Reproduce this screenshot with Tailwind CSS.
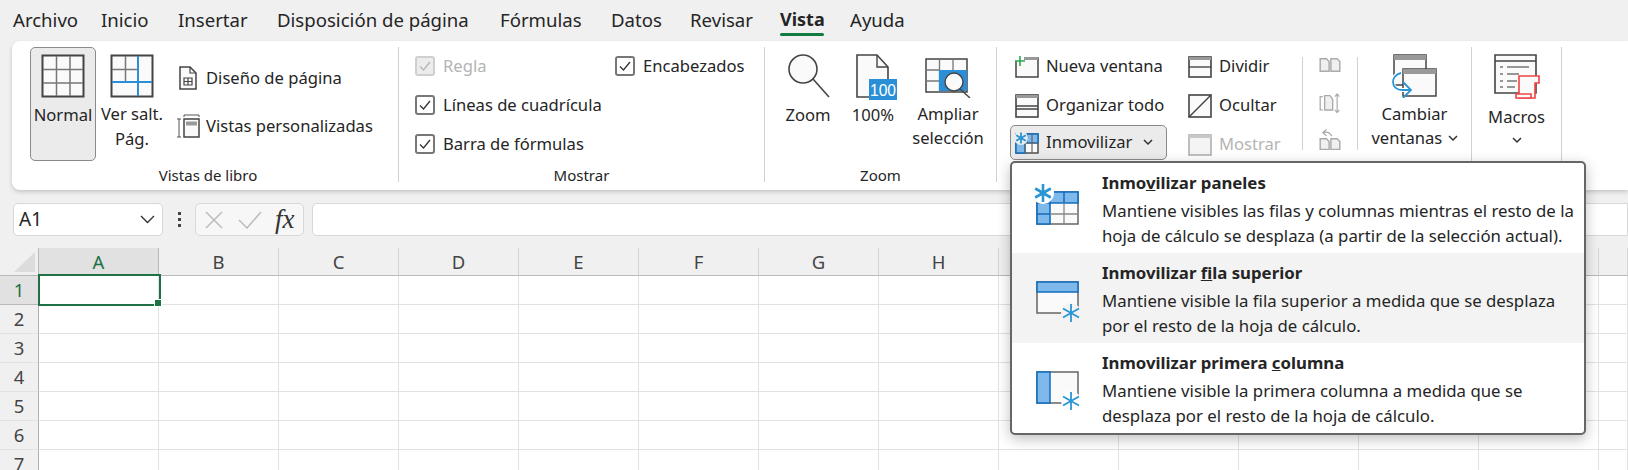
<!doctype html>
<html lang="es">
<head>
<meta charset="UTF-8">
<script src="https://cdn.jsdelivr.net/npm/@tailwindcss/browser@4"></script>
<title>Excel - Vista</title>
</head>
<body class="bg-[#f0f0f0] font-['Noto_Sans',sans-serif] text-[#252525] text-[16.6px] overflow-hidden">
<div class="relative w-[1628px] h-[470px] overflow-hidden">

  <!-- Tabs -->
  <nav class="flex h-[41px] items-start pt-[6px] pl-[13px] text-[18.6px] leading-[27px] whitespace-nowrap">
    <span class="w-[88px]">Archivo</span>
    <span class="w-[77px]">Inicio</span>
    <span class="w-[99px]">Insertar</span>
    <span class="w-[223px]">Disposición de página</span>
    <span class="w-[111px]">Fórmulas</span>
    <span class="w-[79px]">Datos</span>
    <span class="w-[90px]">Revisar</span>
    <span class="w-[70px] font-bold text-[18px]">Vista<span class="block h-[3px] w-[44px] rounded-sm bg-[#107c41]"></span></span>
    <span>Ayuda</span>
  </nav>

  <!-- Ribbon -->
  <section class="ml-[12px] h-[149px] bg-white rounded-l-lg shadow-[0_2px_4px_rgba(0,0,0,0.18)] flex pt-[6px]">

    <!-- Vistas de libro -->
    <div class="w-[387px] h-[135px] flex flex-col border-r border-[#d2d2d2]">
      <div class="h-[114px] shrink-0 flex">
        <div class="ml-[18px] w-[66px] h-[114px] bg-[#ebebeb] border border-[#8a8a8a] rounded-[5px] flex flex-col items-center pt-[6px]">
          <svg width="44" height="44" viewBox="0 0 44 44"><rect x="1.5" y="1.5" width="41" height="41" fill="#fafafa" stroke="#444" stroke-width="2"/><path d="M15.500 2v40M29 2v40M2 15.500h40M2 29h40" stroke="#777" stroke-width="1.500"/></svg>
          <span class="leading-[25px] mt-[4px]">Normal</span>
        </div>
        <div class="ml-[3px] w-[66px] flex flex-col items-center pt-[7px]">
          <svg width="44" height="44" viewBox="0 0 44 44"><rect x="1.5" y="1.5" width="41" height="41" fill="#fafafa" stroke="#444" stroke-width="2"/><path d="M15.500 2v26M2 15.500h26" stroke="#777" stroke-width="1.500"/><path d="M28 2v40M2 28h40" stroke="#2a8fd6" stroke-width="2"/></svg>
          <span class="leading-[25px] mt-[3px] text-center whitespace-nowrap">Ver salt.<br>Pág.</span>
        </div>
        <div class="ml-[11px] pt-[19px] flex flex-col gap-[24px]">
          <div class="flex items-center h-[24px]">
            <svg class="ml-[3px]" width="18" height="24" viewBox="0 0 18 24"><path d="M1 1h10l6 6v16H1z" fill="#fafafa" stroke="#444" stroke-width="1.500"/><path d="M11 1v6h6" fill="none" stroke="#444" stroke-width="1.200"/><path d="M5 12h8v7H5z M9 12v7M5 15.500h8" fill="none" stroke="#444" stroke-width="1.200"/></svg>
            <span class="ml-[9px] whitespace-nowrap">Diseño de página</span>
          </div>
          <div class="flex items-center h-[24px]">
            <svg width="24" height="24" viewBox="0 0 24 24"><path d="M1 5h4M1 23h4M3 5v18M8 1h15M8 1v2M23 1v2" fill="none" stroke="#555" stroke-width="1"/><rect x="8" y="5" width="15" height="18" fill="#fafafa" stroke="#444" stroke-width="1.500"/><rect x="10" y="7.500" width="11" height="4" fill="#999"/></svg>
            <span class="ml-[6px] whitespace-nowrap">Vistas personalizadas</span>
          </div>
        </div>
      </div>
      <div class="text-center text-[15px] leading-[20px] pt-[4px] pl-[6px]">Vistas de libro</div>
    </div>

    <!-- Mostrar -->
    <div class="w-[366px] h-[135px] flex flex-col border-r border-[#d2d2d2]">
      <div class="h-[114px] shrink-0 pl-[16px] grid grid-cols-[200px_1fr] grid-rows-[39px_39px_36px] items-center">
        <label class="flex items-center text-[#b4b4b4]"><span class="w-[20px] h-[20px] bg-[#ececec] border-2 border-[#cfcfcf] rounded-[3px] flex items-center justify-center"><svg width="12" height="12" viewBox="0 0 12 12"><path d="M1 6.500l3.500 3.500L11 2" fill="none" stroke="#b5b5b5" stroke-width="1.300"/></svg></span><span class="ml-[8px]">Regla</span></label>
        <label class="flex items-center"><span class="w-[20px] h-[20px] border-2 border-[#777] rounded-[3px] flex items-center justify-center"><svg width="12" height="12" viewBox="0 0 12 12"><path d="M1 6.500l3.500 3.500L11 2" fill="none" stroke="#333" stroke-width="1.300"/></svg></span><span class="ml-[8px]">Encabezados</span></label>
        <label class="flex items-center col-start-1 whitespace-nowrap"><span class="w-[20px] h-[20px] border-2 border-[#777] rounded-[3px] flex items-center justify-center"><svg width="12" height="12" viewBox="0 0 12 12"><path d="M1 6.500l3.500 3.500L11 2" fill="none" stroke="#333" stroke-width="1.300"/></svg></span><span class="ml-[8px]">Líneas de cuadrícula</span></label>
        <label class="flex items-center col-start-1 whitespace-nowrap pt-[3px]"><span class="w-[20px] h-[20px] border-2 border-[#777] rounded-[3px] flex items-center justify-center"><svg width="12" height="12" viewBox="0 0 12 12"><path d="M1 6.500l3.500 3.500L11 2" fill="none" stroke="#333" stroke-width="1.300"/></svg></span><span class="ml-[8px]">Barra de fórmulas</span></label>
      </div>
      <div class="text-center text-[15px] leading-[20px] pt-[4px]">Mostrar</div>
    </div>

    <!-- Zoom -->
    <div class="w-[232px] h-[135px] flex flex-col border-r border-[#d2d2d2]">
      <div class="h-[114px] shrink-0 flex pl-[10px] pt-[7px]">
        <div class="w-[66px] flex flex-col items-center">
          <svg width="46" height="44" viewBox="0 0 46 44"><circle cx="18" cy="15" r="14" fill="#fafafa" stroke="#444" stroke-width="1.600"/><path d="M28 25l16 18" stroke="#444" stroke-width="1.600"/></svg>
          <span class="leading-[25px] mt-[4px]">Zoom</span>
        </div>
        <div class="w-[64px] flex flex-col items-center">
          <svg width="48" height="46" viewBox="0 0 48 46"><path d="M8 1h20l11 12v30H8z" fill="#fafafa" stroke="#444" stroke-width="1.600"/><path d="M28 1v12h11" fill="none" stroke="#444" stroke-width="1.400"/><rect x="20" y="25" width="28" height="21" fill="#2a8fd6"/><text x="21" y="42" textLength="26" lengthAdjust="spacingAndGlyphs" font-family="Liberation Sans" font-size="16" fill="#fff">100</text></svg>
          <span class="leading-[25px] mt-[2px]">100%</span>
        </div>
        <div class="w-[86px] flex flex-col items-center">
          <svg width="46" height="44" viewBox="0 0 46 44"><rect x="1" y="5" width="41" height="33" fill="#fafafa" stroke="#444" stroke-width="1.500"/><path d="M14.500 5v33M28 5v11M1 16h13M1 27h13" stroke="#777" stroke-width="1.300"/><rect x="14" y="16" width="28" height="21" fill="#2a8fd6"/><circle cx="29" cy="28" r="9" fill="#fafafa" stroke="#444" stroke-width="1.400"/><path d="M35 35l10 9" stroke="#444" stroke-width="1.400"/></svg>
          <span class="leading-[24px] mt-[4px] text-center">Ampliar<br>selección</span>
        </div>
      </div>
      <div class="text-center text-[15px] leading-[20px] pt-[4px]">Zoom</div>
    </div>

    <!-- Ventana -->
    <div class="w-[475px] h-[135px] border-r border-[#d2d2d2] flex">
      <div class="w-[191px] pl-[12px] flex flex-col">
        <div class="h-[39px] flex items-center pl-[6px]">
          <svg width="24" height="22" viewBox="0 0 24 22"><path d="M1 5v16h22V2H9" fill="#fafafa" stroke="#444" stroke-width="1.500"/><rect x="9" y="1" width="14" height="3" fill="#999"/><path d="M5 0v10M0 5h10" stroke="#2ea84f" stroke-width="1.600"/></svg>
          <span class="ml-[7px] whitespace-nowrap">Nueva ventana</span>
        </div>
        <div class="h-[39px] flex items-center pl-[6px]">
          <svg width="24" height="24" viewBox="0 0 24 24"><rect x="1" y="1" width="22" height="22" fill="#fafafa" stroke="#444" stroke-width="1.600"/><rect x="1" y="1" width="22" height="3" fill="#999"/><path d="M1 12h22M1 15h22" stroke="#444" stroke-width="1.400"/></svg>
          <span class="ml-[7px] whitespace-nowrap">Organizar todo</span>
        </div>
        <div class="h-[35px] w-[157px] ml-[1px] bg-[#ebebeb] border border-[#8a8a8a] rounded-[5px] flex items-center pl-[4px]">
          <svg width="24" height="22" viewBox="0 0 24 22"><rect x="1" y="2" width="22" height="19" fill="#fafafa" stroke="#444" stroke-width="1.400"/><path d="M12 2h11v9H12z M1 11h9v10H1z" fill="#7fb8ea" stroke="#106ebe" stroke-width="1.400"/><path d="M17 2v19M10 11h13M10 11v10" stroke="#666" stroke-width="1.200"/><circle cx="6" cy="6" r="7" fill="#ebebeb"/><path d="M6 0.500v11M1.200 3.200l9.600 5.600M10.800 3.200L1.200 8.800" stroke="#2a95d5" stroke-width="1.800"/></svg>
          <span class="ml-[7px]">Inmovilizar</span>
          <svg class="ml-[11px]" width="10" height="7" viewBox="0 0 10 7"><path d="M1 1l4 4 4-4" fill="none" stroke="#333" stroke-width="1.500"/></svg>
        </div>
      </div>
      <div class="w-[114px] flex flex-col">
        <div class="h-[39px] flex items-center">
          <svg width="24" height="22" viewBox="0 0 24 22"><rect x="1" y="1" width="22" height="20" fill="#fafafa" stroke="#444" stroke-width="1.600"/><rect x="1" y="1" width="22" height="3" fill="#999"/><path d="M1 11h22" stroke="#444" stroke-width="1.400"/></svg>
          <span class="ml-[7px]">Dividir</span>
        </div>
        <div class="h-[39px] flex items-center">
          <svg width="24" height="24" viewBox="0 0 24 24"><rect x="1" y="1" width="22" height="22" fill="#fafafa" stroke="#444" stroke-width="1.600"/><path d="M1 23L23 1" stroke="#444" stroke-width="1.400"/></svg>
          <span class="ml-[7px]">Ocultar</span>
        </div>
        <div class="h-[39px] flex items-center text-[#b4b4b4]">
          <svg width="24" height="22" viewBox="0 0 24 22"><rect x="1" y="1" width="22" height="20" fill="#f4f4f4" stroke="#b0b0b0" stroke-width="1.600"/><rect x="1" y="1" width="22" height="3" fill="#c8c8c8"/></svg>
          <span class="ml-[7px]">Mostrar</span>
        </div>
      </div>
      <div class="h-[93px] mt-[10px] w-[56px] border-x border-[#d2d2d2] flex flex-col items-center">
        <svg width="24" height="17" viewBox="0 0 24 17"><path d="M1 2h7l3 3v11H1zM13 2h7l3 3v11H13z" fill="#f0f0f0" stroke="#aaa" stroke-width="1.600"/></svg>
        <svg class="mt-[21px]" width="24" height="24" viewBox="0 0 24 24"><path d="M4 4H1v15h3" fill="none" stroke="#aaa" stroke-width="1.400"/><path d="M6 3h6l3 4v12H6z" fill="#f0f0f0" stroke="#aaa" stroke-width="1.500"/><path d="M20 1v21M17.500 4L20 1l2.500 3M17.500 19l2.500 3 2.500-3" fill="none" stroke="#aaa" stroke-width="1.300"/></svg>
        <svg class="mt-[14px]" width="24" height="24" viewBox="0 0 24 24"><path d="M1 11h7l3 3v9H1zM13 11h7l3 3v9H13z" fill="#f0f0f0" stroke="#aaa" stroke-width="1.600"/><path d="M14 8c-2-4-6-5-10-4M8 0.500L4 4l4 3.500" fill="none" stroke="#aaa" stroke-width="1.400"/></svg>
      </div>
      <div class="flex-1 flex flex-col items-center pt-[7px]">
        <svg width="46" height="44" viewBox="0 0 46 44"><path d="M2 1h32v30H2z" fill="#fafafa" stroke="#444" stroke-width="1.500"/><rect x="2" y="1" width="32" height="5" fill="#999"/><path d="M11 15h33v27H11z" fill="#fafafa" stroke="#444" stroke-width="1.500"/><rect x="11" y="15" width="33" height="5" fill="#999"/><path d="M9 19c-6 1-8 6-8 9 0 5 4 8 9 8h9" fill="none" stroke="#fff" stroke-width="4"/><path d="M9 19c-6 1-8 6-8 9 0 5 4 8 9 8h9" fill="none" stroke="#2a95d5" stroke-width="1.800"/><path d="M11 28l8 8-8 8" fill="none" stroke="#2a95d5" stroke-width="1.800"/></svg>
        <span class="leading-[24px] mt-[4px] text-center whitespace-nowrap">Cambiar<br>ventanas <svg class="inline ml-[1px] mb-[3px]" width="10" height="7" viewBox="0 0 10 7"><path d="M1 1l4 4 4-4" fill="none" stroke="#333" stroke-width="1.500"/></svg></span>
      </div>
    </div>

    <!-- Macros -->
    <div class="w-[90px] h-[135px] border-r border-[#d2d2d2] flex flex-col items-center pt-[7px]">
      <svg width="46" height="46" viewBox="0 0 46 46"><path d="M1 1h41v38H1z" fill="#fafafa" stroke="#444" stroke-width="1.600"/><path d="M1 7h41" stroke="#444" stroke-width="1.600"/><path d="M6 13h3M13 13h22M6 20h3M13 20h12M6 27h3M13 27h10M6 33h3M13 33h8" stroke="#777" stroke-width="1.400"/><path d="M25 22h20v7h-4v15H25z" fill="#fafafa" stroke="#ef4444" stroke-width="1.600"/><path d="M22 40h15v4H22z" fill="#fafafa" stroke="#ef4444" stroke-width="1.600"/></svg>
      <span class="leading-[25px] mt-[4px]">Macros</span>
      <svg width="10" height="7" viewBox="0 0 10 7" class="mt-[8px]"><path d="M1 1l4 4 4-4" fill="none" stroke="#333" stroke-width="1.500"/></svg>
    </div>
  </section>

  <!-- Formula bar -->
  <section class="flex h-[33px] mt-[13px]">
    <div class="ml-[13px] w-[150px] bg-white border border-[#d8d8d8] rounded-[5px] flex items-center justify-between pl-[5px] pr-[7px] text-[19px]">A1
      <svg width="15" height="9" viewBox="0 0 15 9"><path d="M1 1l6.500 6.500L14 1" fill="none" stroke="#333" stroke-width="1.400"/></svg>
    </div>
    <div class="w-[32px] flex flex-col items-center justify-center gap-[3px]">
      <i class="block w-[3px] h-[3px] bg-[#444]"></i><i class="block w-[3px] h-[3px] bg-[#444]"></i><i class="block w-[3px] h-[3px] bg-[#444]"></i>
    </div>
    <div class="w-[109px] bg-[#f7f7f7] border border-[#d8d8d8] rounded-[5px] flex items-center pl-[9px]">
      <svg width="18" height="18" viewBox="0 0 18 18"><path d="M1 1l16 16M17 1L1 17" stroke="#bcbcbc" stroke-width="1.500"/></svg>
      <svg class="ml-[15px]" width="24" height="18" viewBox="0 0 24 18"><path d="M1 9l8 8L23 1" fill="none" stroke="#bcbcbc" stroke-width="1.500"/></svg>
      <span class="ml-[13px] font-['Liberation_Serif',serif] italic text-[27px] leading-none text-[#333]">fx</span>
    </div>
    <div class="ml-[8px] flex-1 bg-white border border-[#d8d8d8] rounded-l-[5px]"></div>
  </section>

  <!-- Sheet -->
  <section id="sheet" class="mt-[12px] grid grid-cols-[39px_repeat(13,120px)_29px] grid-rows-[28px_repeat(7,29px)]"></section>

  <!-- Selected cell -->
  <div class="absolute left-[38px] top-[274px] w-[123px] h-[32px] border-2 border-[#1e7145]">
    <i class="absolute -right-[3px] -bottom-[3px] w-[6px] h-[6px] bg-[#1e7145] border border-white box-content"></i>
  </div>

  <!-- Inmovilizar menu -->
  <div class="absolute left-[1010px] top-[161px] w-[576px] h-[274px] bg-white border-2 border-[#666] rounded-[5px] shadow-[0_4px_14px_rgba(0,0,0,0.25)] overflow-hidden text-[16.8px]">
    <div class="flex h-[90px]">
      <div class="w-[90px] pl-[24px] pt-[19px] shrink-0">
        <svg class="overflow-visible" width="46" height="46" viewBox="0 0 46 46"><rect x="1" y="10" width="41" height="32" fill="#fafafa" stroke="#666" stroke-width="1.500"/><path d="M14 10h28v11H14zM1 21h13v21H1z" fill="#7fb8ea" stroke="#106ebe" stroke-width="1.600"/><path d="M28 10v11M14 32H1" stroke="#106ebe" stroke-width="1.500"/><path d="M28 21v21M14 32h28" stroke="#888" stroke-width="1.300"/><circle cx="7" cy="11" r="11" fill="#fff"/><path d="M7 2v18M-0.800 6.500l15.600 9M14.800 6.500l-15.600 9" stroke="#2a95d5" stroke-width="2.600"/></svg>
      </div>
      <div class="pt-[7px] whitespace-nowrap leading-[25px]"><b class="block">Inmo<u>v</u>ilizar paneles</b><span class="block mt-[3px]">Mantiene visibles las filas y columnas mientras el resto de la<br>hoja de cálculo se desplaza (a partir de la selección actual).</span></div>
    </div>
    <div class="flex h-[90px] bg-[#f3f3f3]">
      <div class="w-[90px] pl-[24px] pt-[28px] shrink-0">
        <svg width="50" height="44" viewBox="0 0 50 44"><path d="M1 1h41v31H1z" fill="#fafafa" stroke="#666" stroke-width="1.500"/><rect x="1" y="1" width="41" height="10" fill="#7fb8ea" stroke="#106ebe" stroke-width="1.500"/><circle cx="35" cy="32" r="10" fill="#f3f3f3"/><path d="M35 23v18M27 27.500l16 9M43 27.500l-16 9" stroke="#2a95d5" stroke-width="1.800"/></svg>
      </div>
      <div class="pt-[7px] whitespace-nowrap leading-[25px]"><b class="block">Inmovilizar <u>f</u>ila superior</b><span class="block mt-[3px]">Mantiene visible la fila superior a medida que se desplaza<br>por el resto de la hoja de cálculo.</span></div>
    </div>
    <div class="flex h-[90px]">
      <div class="w-[90px] pl-[24px] pt-[28px] shrink-0">
        <svg width="50" height="44" viewBox="0 0 50 44"><path d="M1 1h41v31H1z" fill="#fafafa" stroke="#666" stroke-width="1.500"/><rect x="1" y="1" width="13" height="31" fill="#7fb8ea" stroke="#106ebe" stroke-width="1.500"/><circle cx="35" cy="30" r="10" fill="#fff"/><path d="M35 21v18M27 25.500l16 9M43 25.500l-16 9" stroke="#2a95d5" stroke-width="1.800"/></svg>
      </div>
      <div class="pt-[7px] whitespace-nowrap leading-[25px]"><b class="block">Inmovilizar primera <u>c</u>olumna</b><span class="block mt-[3px]">Mantiene visible la primera columna a medida que se<br>desplaza por el resto de la hoja de cálculo.</span></div>
    </div>
  </div>
</div>

<script>
  const sheet = document.getElementById('sheet');
  const letters = ['A','B','C','D','E','F','G','H','I','J','K','L','M',''];

  function addCell(cls, text) {
    const el = document.createElement('div');
    el.className = cls;
    el.textContent = text || '';
    sheet.appendChild(el);
    return el;
  }

  // corner with the small triangle
  const corner = addCell('border-b border-r border-[#b8b8b8] flex items-end justify-end pr-[3px] pb-[3px]');
  corner.innerHTML = '<svg width="21" height="20" viewBox="0 0 21 20"><path d="M21 0v20H0z" fill="#dcdcdc"/></svg>';

  letters.forEach((l, i) => {
    addCell(i === 0
      ? 'bg-[#e1e1e1] text-[#1e7145] border-b border-r border-[#b8b8b8] flex items-center justify-center text-[18.5px]'
      : 'border-b border-r border-[#d4d4d4] border-b-[#b8b8b8] text-[#444] flex items-center justify-center text-[18.5px]', l);
  });

  for (let r = 1; r <= 7; r++) {
    addCell(r === 1
      ? 'bg-[#e1e1e1] text-[#1e7145] border-b border-r border-[#b8b8b8] flex items-center justify-center text-[18.5px]'
      : 'text-[#444] border-b border-r border-[#e2e2e2] border-r-[#b0b0b0] flex items-center justify-center text-[18.5px]', String(r));
    letters.forEach(() => addCell('bg-white border-b border-r border-[#e2e2e2]'));
  }
</script>
</body>
</html>
